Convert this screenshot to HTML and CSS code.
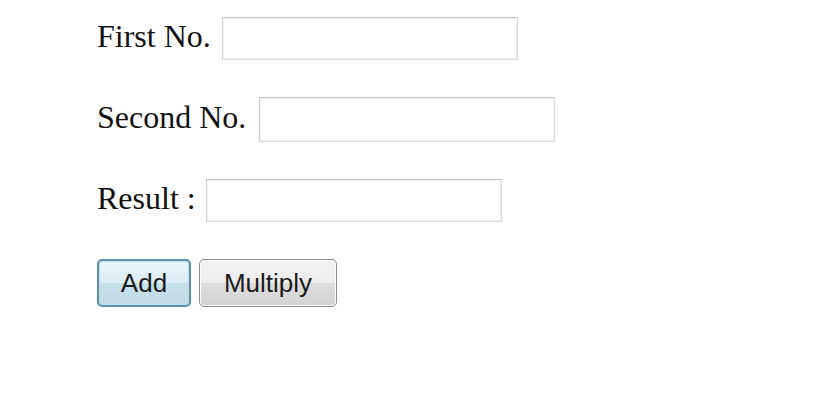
FILE: index.html
```html
<!DOCTYPE html>
<html>
<head>
<meta charset="utf-8">
<link rel="stylesheet" href="styles.css">
</head>
<body>
<form class="calc">
  <div class="row row-first">
    <label class="lbl">First No.</label>
    <input class="field" type="text">
  </div>
  <div class="row row-second">
    <label class="lbl">Second No.</label>
    <input class="field" type="text">
  </div>
  <div class="row row-result">
    <label class="lbl">Result :</label>
    <input class="field" type="text">
  </div>
  <div class="buttons">
    <button type="button" class="btn btn-add">Add</button>
    <button type="button" class="btn btn-mul">Multiply</button>
  </div>
</form>
</body>
</html>
```
FILE: styles.css
```css
html, body {
  margin: 0;
  padding: 0;
  background: #ffffff;
}
.calc {
  padding: 17px 0 0 97px;
  display: flex;
  flex-direction: column;
  align-items: flex-start;
}
.row {
  display: flex;
  align-items: center;
  gap: 11px;
  height: 43px;
  margin-bottom: 37px;
}
.row-second {
  gap: 13px;
  height: 45px;
  margin-bottom: 37px;
}
.row-result {
  gap: 10px;
  margin-bottom: 37px;
}
.lbl {
  font-family: "Liberation Serif", "Times New Roman", serif;
  font-size: 32px;
  color: #111111;
  line-height: 1;
  margin-top: -5px;
}
.field {
  box-sizing: border-box;
  width: 296px;
  height: 100%;
  margin: 0;
  border: 1px solid #dadada;
  border-top-color: #c4c4c4;
  border-left-color: #d0d0d0;
  box-shadow: inset 1px 1px 0 #f2f2f2, inset -1px -1px 0 #f2f2f2;
  background: #ffffff;
  outline: none;
}
.buttons {
  display: flex;
  gap: 8px;
}
.btn {
  box-sizing: border-box;
  height: 48px;
  margin: 0;
  font-family: "Liberation Sans", Arial, sans-serif;
  font-size: 26px;
  color: #1b1b1b;
  border-radius: 5px;
  padding: 0;
  cursor: default;
}
.btn-add {
  width: 94px;
  border: 2px solid #5d93a5;
  background: linear-gradient(#eaf4f8 0%, #dcecf3 50%, #c9e1ea 51%, #bfdbe6 100%);
  box-shadow: inset 0 0 0 1px #b9e0ee;
}
.btn-mul {
  width: 138px;
  border: 1.5px solid #8e8e8e;
  background: linear-gradient(#f4f4f4 0%, #ececec 50%, #dedede 51%, #d3d3d3 100%);
  box-shadow: inset 0 0 0 1px #fafafa;
}
```
